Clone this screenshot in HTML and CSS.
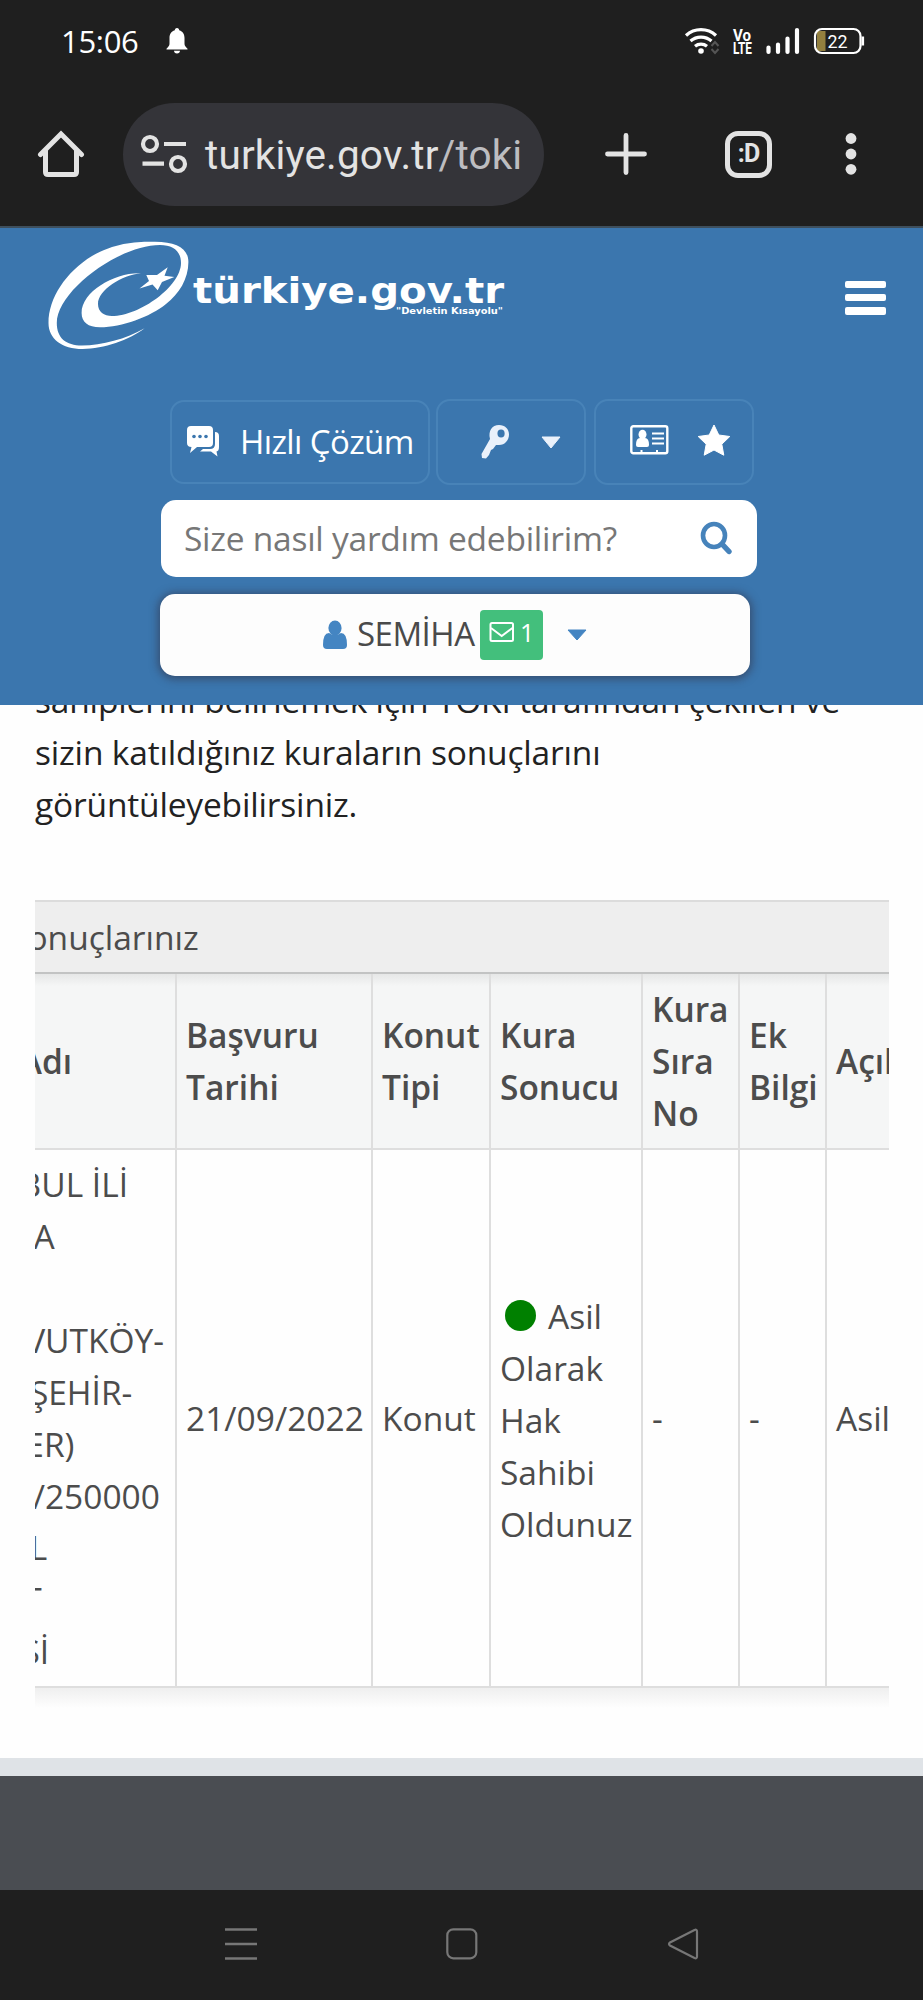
FILE: index.html
```html
<!DOCTYPE html>
<html lang="tr">
<head>
    <meta charset="UTF-8">
    <meta name="viewport" content="width=device-width, initial-scale=1.0">
    <title>TOKİ Kura Sonuçları</title>
    <link rel="stylesheet" href="styles.css">
</head>
<body>
    <div class="status-bar">
        <span class="clock">15:06</span>
        <svg class="bell" width="22" height="26" viewBox="0 0 22 26"><path d="M11 0c1.500 0 2.200 1 2.200 2.300C17 3.500 18.500 6.500 18.500 10v5.500c0 2 .8 3.200 3 5.300v.7H.5v-.7c2.200-2.100 3-3.300 3-5.300V10c0-3.500 1.500-6.500 5.300-7.700C8.800 1 9.500 0 11 0zM8 22.800h6c0 1.600-1.200 2.600-3 2.600s-3-1-3-2.600z" fill="#fff"/></svg>
        <svg class="status-icons" width="182" height="30" viewBox="684 26 182 30">
            <g fill="none" stroke="#fff" stroke-width="3.200">
                <path d="M686 35.500a22 22 0 0 1 30 0"/>
                <path d="M690.500 41a16 16 0 0 1 21 0"/>
                <path d="M695 46.200a9.500 9.500 0 0 1 12 0"/>
            </g>
            <circle cx="701" cy="51" r="2.800" fill="#fff"/>
            <path d="M711.500 46l3.500-4 3.500 4M711.500 49l3.500 4 3.500-4" fill="none" stroke="#555" stroke-width="2"/>
            <text class="volte" x="733" y="41" textLength="18" lengthAdjust="spacingAndGlyphs">Vo</text>
            <text class="volte" x="733" y="54" textLength="19" lengthAdjust="spacingAndGlyphs">LTE</text>
            <path d="M768.500 47.500v4.500M778 44.500V52M787.500 38.500V52M797 30v22" stroke="#fff" stroke-width="4.200" stroke-linecap="round"/>
            <rect x="817" y="31" width="8.500" height="20" fill="#93803f"/>
            <rect x="815" y="29" width="45.500" height="24" rx="7" fill="none" stroke="#fff" stroke-width="2.200"/>
            <path d="M862.800 36.500v9" stroke="#fff" stroke-width="2.600"/>
            <text class="battery" x="827.500" y="47.500" textLength="20" lengthAdjust="spacingAndGlyphs">22</text>
        </svg>
    </div>

    <div class="toolbar">
        <svg class="home" width="48" height="48" viewBox="0 0 48 48"><path d="M3.500 24.500L24 4l20.500 20.500M8.500 21v21q0 2.500 2.500 2.500h26q2.500 0 2.500-2.500V21" fill="none" stroke="#e3e3e3" stroke-width="5" stroke-linecap="round"/></svg>
        <div class="url-pill">
            <svg width="48" height="40" viewBox="0 0 48 40"><g fill="none" stroke="#e3e3e3" stroke-width="4.200"><circle cx="10" cy="10" r="7"/><circle cx="38" cy="30" r="7"/><path d="M24 10h22M2.500 29.700H24"/></g></svg>
            <span class="url">turkiye.gov.tr<span class="path">/toki</span></span>
        </div>
        <svg class="plus" width="42" height="42" viewBox="0 0 42 42"><path d="M21 2.500v37M2.500 21h37" stroke="#e3e3e3" stroke-width="4.800" stroke-linecap="round"/></svg>
        <div class="tabs">:D</div>
        <svg class="dots" width="12" height="44" viewBox="0 0 12 44"><g fill="#e3e3e3"><circle cx="6" cy="6.500" r="5.400"/><circle cx="6" cy="22" r="5.400"/><circle cx="6" cy="37.300" r="5.400"/></g></svg>
    </div>

    <header class="site-header">
        <div class="brand-row">
            <!-- logo -->
            <svg width="464" height="118" viewBox="0 0 464 118">
                <path fill="#fff" d="M100.600 92.300C85 104 60 113 38.600 113 18 113 4.500 103 4.500 87 4.500 62 22 36 48 20 72 6 94 5.500 111 5.700c21 .3 33.400 6.300 33.400 20.300 0 17-9.400 32-22.400 42-16 13-44 23.300-66 23.300-12 0-18.400-5.300-18.400-14.300 0-22 34.400-41 59.400-39.700C78 39 54 54 54 68c0 8 6 12 14 12 28 0 69-30 69-53 0-12-8-18-21-18C75 9 12.800 55 12.800 87c0 15 9.200 22.500 25.200 22.500 20 0 44-6.500 62.600-17.200z"/>
                <path fill="#fff" d="M123.700 31.300l-3.200 8.400 9.800 1.300-12.300 5-4.300 8.300-5.200-5.800-13 4 9.500-7.500-2.700-6 10.700 0z"/>
                <text class="logo-name" x="149" y="66.500" textLength="311" lengthAdjust="spacingAndGlyphs">türkiye.gov.tr</text>
                <text class="logo-motto" x="352" y="77.500" textLength="107" lengthAdjust="spacingAndGlyphs">"Devletin Kısayolu"</text>
            </svg>
            <div class="menu-btn"><i></i><i></i><i></i></div>
        </div>

        <div class="quick-row">
            <div class="quick quick-help">
                <svg width="34" height="32" viewBox="0 0 34 32">
                    <path fill="#fff" d="M5 1h18q4 0 4 4v13q0 4-4 4H11l-7 6 1.500-6Q1 22 1 18V5q0-4 4-4z"/>
                    <path fill="#fff" d="M29 7q4 0 4 4v11q0 4-2.500 4.500l1 5-6.500-5H14l3-2.500h7q5 0 5-5z"/>
                    <g fill="#3b76ae"><circle cx="8" cy="11.500" r="1.800"/><circle cx="14" cy="11.500" r="1.800"/><circle cx="20" cy="11.500" r="1.800"/></g>
                </svg>
                <span>Hızlı Çözüm</span>
            </div>
            <div class="quick quick-key">
                <svg width="30" height="36" viewBox="0 0 30 36"><path fill="#eaf1fb" fill-rule="evenodd" d="M19 1c6 0 10 4 10 9.500S25 21 19 21l-3 0-3 4-2 1-2 5-3 3.500-4-.5-.5-4L10 15C8 7 12 1 19 1zm2 4.500a3.600 4 0 1 0 .1 8 3.600 4 0 0 0-.1-8z"/></svg>
                <svg class="caret" width="20" height="13" viewBox="0 0 20 13"><path fill="#eaf1fb" d="M1 1h18l-9 11z" stroke="#eaf1fb" stroke-linejoin="round"/></svg>
            </div>
            <div class="quick quick-card">
                <svg width="39" height="30" viewBox="0 0 39 30">
                    <rect x="1.300" y="1.300" width="36" height="27" rx="2" fill="none" stroke="#fff" stroke-width="2.400"/>
                    <g fill="#fff"><ellipse cx="12.500" cy="9.500" rx="4" ry="4.700"/><path d="M6 20q0-7 4-7h5q4 0 4 7 0 2-2 2H8q-2 0-2-2z"/></g>
                    <path d="M22 8.500h12M22 13.500h12M22 18.500h12M11.500 25v4M27 25v4" stroke="#fff" stroke-width="2"/>
                </svg>
                <svg width="34" height="32" viewBox="0 0 34 32"><path fill="#fff" stroke="#fff" stroke-linejoin="round" d="M17 1l4.800 10 11 1.500-8 7.700 2 11L17 26l-9.800 5.200 2-11-8-7.700 11-1.500z"/></svg>
            </div>
        </div>

        <div class="search">
            <span>Size nasıl yardım edebilirim?</span>
            <svg width="32" height="34" viewBox="0 0 32 34"><g fill="none" stroke="#4683bb"><ellipse cx="14" cy="14.500" rx="11" ry="11.500" stroke-width="4.600"/><path d="M22 23l7 7.500" stroke-width="5.400" stroke-linecap="round"/></g></svg>
        </div>

        <div class="user">
            <svg width="24" height="30" viewBox="0 0 24 30"><g fill="#4485c2"><ellipse cx="12" cy="8" rx="6.600" ry="7.500"/><path d="M0 25q0-12 6-12 6 4 12 0 6 0 6 12 0 4-4 4H4q-4 0-4-4z"/></g></svg>
            <span class="user-name">SEMİHA</span>
            <span class="badge">
                <svg width="26" height="20" viewBox="0 0 26 20"><g fill="none" stroke="#fff" stroke-width="2"><rect x="1.500" y="1" width="22.500" height="18" rx="1.500"/><path d="M2 6l10.700 8L23.500 6"/></g></svg>
                <b>1</b>
            </span>
            <svg class="caret" width="20" height="12" viewBox="0 0 20 12"><path fill="#4485c2" d="M1 1h18l-9 10z" stroke="#4485c2" stroke-linejoin="round"/></svg>
        </div>
    </header>

    <main class="content">
        <p class="intro">sahiplerini belirlemek için TOKİ tarafından çekilen ve<br>sizin katıldığınız kuraların sonuçlarını<br>görüntüleyebilirsiniz.</p>

        <div class="table-scroll">
            <table>
                <caption>Kura Sonuçlarınız</caption>
                <colgroup>
                    <col class="c-name"><col class="c-date"><col class="c-type"><col class="c-result"><col class="c-order"><col class="c-info"><col class="c-note">
                </colgroup>
                <thead>
                    <tr>
                        <th>Proje Adı</th>
                        <th>Başvuru Tarihi</th>
                        <th>Konut<br>Tipi</th>
                        <th>Kura Sonucu</th>
                        <th>Kura Sıra No</th>
                        <th>Ek<br>Bilgi</th>
                        <th>Açıklama</th>
                    </tr>
                </thead>
                <tbody>
                    <tr>
                        <td>İSTANBUL İLİ<br>AVRUPA<br>YAKA<br>(ARNAVUTKÖY-<br>BAŞAKŞEHİR-<br>ESENLER)<br>(50000/250000<br>SOSYAL<br>KONUT<br>PROJESİ</td>
                        <td>21/09/2022</td>
                        <td>Konut</td>
                        <td class="result"><i class="dot"></i>Asil<br>Olarak<br>Hak<br>Sahibi<br>Oldunuz</td>
                        <td>-</td>
                        <td>-</td>
                        <td>Asil</td>
                    </tr>
                </tbody>
            </table>
            <div class="table-shadow"></div>
        </div>
    </main>

    <footer class="site-footer"></footer>

    <nav class="nav-bar">
        <svg width="32" height="32" viewBox="0 0 32 32"><path d="M0 1.500h32M0 16h32M0 30.500h32" stroke="#777" stroke-width="2.400"/></svg>
        <svg width="32" height="32" viewBox="0 0 32 32"><rect x="1.300" y="1.300" width="29" height="29" rx="6" fill="none" stroke="#777" stroke-width="2.200"/></svg>
        <svg width="32" height="32" viewBox="0 0 32 32"><path d="M27.500 2L3 14.500q-2 1.500 0 3L27.500 30q2.500 1 2.500-1.500v-25Q30 1 27.500 2z" fill="none" stroke="#777" stroke-width="2.200"/></svg>
    </nav>
</body>
</html>
```
FILE: styles.css
```css
* {
    margin: 0;
    padding: 0;
    box-sizing: border-box;
}

body {
    width: 923px;
    height: 2000px;
    display: flex;
    flex-direction: column;
    background: #fefefe;
    font-family: 'Open Sans', 'Noto Sans', sans-serif;
    font-size: 33.5px;
    color: #4c4c4c;
    overflow: hidden;
}

svg {
    display: block;
    flex-shrink: 0;
}

/* phone bars */
.status-bar {
    height: 82px;
    flex-shrink: 0;
    display: flex;
    align-items: center;
    background: #1f1f1f;
    color: #fff;
    padding-left: 61px;
}

.clock {
    font-family: 'Open Sans', sans-serif;
    font-size: 31px;
    line-height: 40px;
    width: 78px;
    padding-bottom: 1px;
    letter-spacing: -0.3px;
}

.bell {
    margin-left: 27px;
}

.status-icons {
    margin-left: 496px;
}

.volte {
    font: bold 16.5px 'Roboto', sans-serif;
    fill: #fff;
}

.battery {
    font: 18.5px 'Roboto', sans-serif;
    fill: #fff;
}

.toolbar {
    height: 146px;
    flex-shrink: 0;
    display: flex;
    align-items: center;
    padding: 0 0 0 37px;
    background: #1f1f1f;
    border-bottom: 2px solid #3e4f5d;
}

.url-pill {
    width: 421px;
    height: 103px;
    margin-left: 38px;
    padding-left: 17px;
    display: flex;
    align-items: center;
    gap: 17px;
    border-radius: 52px;
    background: #343439;
}

.url {
    padding-top: 2px;
    font-family: 'Roboto', sans-serif;
    font-size: 40.5px;
    letter-spacing: 0.15px;
    white-space: nowrap;
    color: #e3e3e3;
}

.path {
    color: #bdbdc0;
}

.plus {
    margin-left: 61px;
}

.tabs {
    width: 47px;
    height: 47px;
    margin-left: 78px;
    border: 5px solid #e3e3e3;
    border-radius: 13px;
    font: bold 25px/36px 'Roboto', sans-serif;
    letter-spacing: -1px;
    text-align: center;
    color: #e3e3e3;
}

.dots {
    margin-left: 73px;
}

/* header */
.site-header {
    height: 477px;
    flex-shrink: 0;
    background: #3b76ae;
    color: #fff;
}

.brand-row {
    display: flex;
    justify-content: space-between;
    padding: 8px 37px 0 44px;
}

.logo-name {
    font: bold 35px 'DejaVu Sans', sans-serif;
    fill: #fff;
}

.logo-motto {
    font: bold 9.5px 'DejaVu Sans', sans-serif;
    fill: #fff;
}

.menu-btn {
    width: 41px;
    padding-top: 45px;
    display: flex;
    flex-direction: column;
    gap: 6px;
}

.menu-btn i {
    height: 7.200px;
    border-radius: 2px;
    background: #fff;
}

.quick-row {
    display: flex;
    align-items: center;
    margin: 45px 0 0 170px;
}

.quick {
    height: 86px;
    display: flex;
    align-items: center;
    border: 2px solid #4883b8;
    border-radius: 14px;
}

.quick-help {
    width: 260px;
    height: 84px;
    padding: 0 0 2px 14px;
    gap: 20px;
    font-size: 33px;
    letter-spacing: -0.6px;
    white-space: nowrap;
}

.quick-key {
    width: 150px;
    margin-left: 6px;
    padding-left: 42px;
    gap: 31px;
}

.quick-card {
    width: 160px;
    margin-left: 8px;
    padding-left: 34px;
    gap: 28px;
}

.quick-card svg {
    margin-bottom: 4px;
}

.search {
    width: 596px;
    height: 77px;
    margin: 15px 0 0 161px;
    padding: 0 25px 1px 23px;
    display: flex;
    align-items: center;
    justify-content: space-between;
    border-radius: 15px;
    background: #fff;
    color: #777;
    letter-spacing: -0.25px;
}

.user {
    width: 590px;
    height: 82px;
    margin: 17px 0 0 160px;
    padding-left: 163px;
    display: flex;
    align-items: center;
    border-radius: 15px;
    background: #fdfdfd;
    box-shadow: 0 1px 9px 2px rgba(50, 50, 70, 0.6);
    color: #4a4a4a;
}

.user-name {
    width: 121px;
    margin-left: 10px;
    padding-bottom: 3px;
    font-size: 33px;
    letter-spacing: -0.5px;
}

.badge {
    width: 63px;
    height: 50px;
    margin-left: 2px;
    padding: 0 0 6px 9px;
    display: flex;
    align-items: center;
    gap: 5px;
    border-radius: 4px;
    background: #43bf7c;
    color: #fff;
}

.badge b {
    font-size: 25px;
    font-weight: 400;
}

.user .caret {
    margin-left: 24px;
}

/* page */
.content {
    height: 1053px;
    flex-shrink: 0;
    padding: 0 34px 0 35px;
    overflow: hidden;
}

.intro {
    margin-top: -30px;
    line-height: 51.8px;
    letter-spacing: -0.17px;
    color: #222;
    white-space: nowrap;
}

.table-scroll {
    margin-top: 70px;
    overflow: hidden;
}

table {
    width: 1113px;
    margin-left: -117px;
    table-layout: fixed;
    border-collapse: separate;
    border-spacing: 0;
}

.c-name { width: 259px; }
.c-date { width: 196px; }
.c-type { width: 118px; }
.c-result { width: 152px; }
.c-order { width: 97px; }
.c-info { width: 87px; }
.c-note { width: 204px; }

caption {
    height: 74px;
    padding-left: 9px;
    line-height: 70px;
    text-align: left;
    background: #eee;
    border-top: 2px solid #dcdcdc;
    border-bottom: 2px solid #c2c3c3;
}

th, td {
    padding: 9px 0 8px 9px;
    text-align: left;
    vertical-align: middle;
    line-height: 51.9px;
    border-right: 2px solid #dedede;
    border-bottom: 2px solid #dedede;
}

th {
    padding-top: 10px;
    font-weight: 600;
    background: #f5f6f6;
    background-image: linear-gradient(#e6e7e7, #f5f6f6 12px);
}

.result {
    padding-top: 13px;
}

.dot {
    display: inline-block;
    width: 31px;
    height: 31px;
    margin: 0 12px -2px 5px;
    border-radius: 50%;
    background: #008000;
}

.table-shadow {
    height: 20px;
    background: linear-gradient(#efefef, #fefefe);
}

.site-footer {
    height: 132px;
    flex-shrink: 0;
    background: #4a4d52;
    border-top: 18px solid #dfe3e7;
}

.nav-bar {
    flex: 1;
    display: flex;
    justify-content: center;
    gap: 189px;
    padding-top: 38px;
    background: #1f1f1f;
}
```
